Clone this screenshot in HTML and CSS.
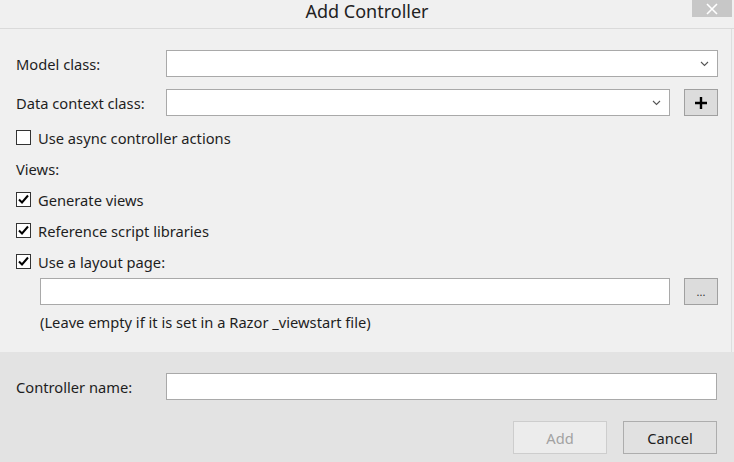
FILE: index.html
```html
<!DOCTYPE html>
<html lang="en">
<head>
<meta charset="UTF-8">
<meta name="viewport" content="width=device-width, initial-scale=1.0">
<title>Add Controller</title>
<link rel="stylesheet" href="styles.css">
</head>
<body>
<div class="dialog">
  <div class="titlebar">
    <span class="title">Add Controller</span>
    <div class="close">
      <svg width="14" height="14" viewBox="0 0 14 14"><path d="M2 2 L12 12 M12 2 L2 12" stroke="#fff" stroke-width="1.6"/></svg>
    </div>
  </div>

  <div class="main">
    <div class="field-row">
      <label class="label">Model class:</label>
      <div class="combo">
        <svg class="chevron" width="9" height="6" viewBox="0 0 9 6"><path d="M1 1 L4.5 4.5 L8 1" fill="none" stroke="#555" stroke-width="1.1"/></svg>
      </div>
    </div>
    <div class="field-row">
      <label class="label">Data context class:</label>
      <div class="combo">
        <svg class="chevron" width="9" height="6" viewBox="0 0 9 6"><path d="M1 1 L4.5 4.5 L8 1" fill="none" stroke="#555" stroke-width="1.1"/></svg>
      </div>
      <button class="side-btn">
        <svg width="14" height="14" viewBox="0 0 14 14"><path d="M7 1 V13 M1 7 H13" stroke="#000" stroke-width="2.4"/></svg>
      </button>
    </div>

    <div class="check-row first">
      <span class="box"></span>
      <span>Use async controller actions</span>
    </div>
    <div class="check-row">
      <span>Views:</span>
    </div>
    <div class="check-row">
      <span class="box checked"><svg width="13" height="13" viewBox="0 0 13 13"><path d="M2 6.5 L5 9.5 L11 2.5" fill="none" stroke="#000" stroke-width="2"/></svg></span>
      <span>Generate views</span>
    </div>
    <div class="check-row">
      <span class="box checked"><svg width="13" height="13" viewBox="0 0 13 13"><path d="M2 6.5 L5 9.5 L11 2.5" fill="none" stroke="#000" stroke-width="2"/></svg></span>
      <span>Reference script libraries</span>
    </div>
    <div class="check-row">
      <span class="box checked"><svg width="13" height="13" viewBox="0 0 13 13"><path d="M2 6.5 L5 9.5 L11 2.5" fill="none" stroke="#000" stroke-width="2"/></svg></span>
      <span>Use a layout page:</span>
    </div>

    <div class="layout-row">
      <div class="textbox"></div>
      <button class="side-btn dots">...</button>
    </div>
    <p class="hint">(Leave empty if it is set in a Razor _viewstart file)</p>
  </div>

  <div class="footer">
    <div class="field-row">
      <label class="label">Controller name:</label>
      <div class="textbox"></div>
    </div>
    <div class="buttons">
      <button class="btn" disabled>Add</button>
      <button class="btn cancel">Cancel</button>
    </div>
  </div>
</div>
</body>
</html>
```

FILE: styles.css
```css
body {
  margin: 0;
  background-color: #f0f0f0;
  font-family: "Noto Sans", "Open Sans", sans-serif;
  font-size: 14.7px;
  color: #1e1e1e;
}

.dialog {
  width: 734px;
  height: 462px;
  display: flex;
  flex-direction: column;
}

.titlebar {
  position: relative;
  height: 28px;
  border-bottom: 1px solid #dadada;
  display: flex;
  justify-content: center;
  align-items: center;
}

.title {
  font-size: 18px;
  color: #222;
  margin-top: -7px;
}

.close {
  position: absolute;
  top: 0;
  right: 2px;
  width: 40px;
  height: 17px;
  background-color: #c7c7c7;
  display: flex;
  justify-content: center;
  align-items: center;
}

.main {
  flex: 1;
  padding: 21px 13px 0 16px;
  margin-right: 2px;
  border-right: 1px solid #dedede;
}

.field-row {
  display: flex;
  align-items: center;
  height: 27px;
  margin-bottom: 12px;
}

.label {
  width: 150px;
}

.combo,
.textbox {
  flex: 1;
  height: 25px;
  background-color: #fff;
  border: 1px solid #a9a9a9;
  position: relative;
}

.chevron {
  position: absolute;
  right: 8px;
  top: 10px;
}

.side-btn {
  width: 34px;
  height: 27px;
  margin-left: 14px;
  background-color: #dcdcdc;
  border: 1px solid #a0a0a0;
  padding: 0;
  display: flex;
  justify-content: center;
  align-items: center;
  font-family: inherit;
}

.side-btn.dots {
  font-size: 11px;
  color: #333;
  align-items: flex-end;
  padding-bottom: 7px;
  line-height: 1;
}

.check-row {
  height: 31px;
  display: flex;
  align-items: center;
}

.check-row.first {
  margin-top: -6px;
}

.box {
  width: 13px;
  height: 13px;
  border: 1px solid #333;
  background-color: #fff;
  margin-right: 7px;
  display: flex;
  justify-content: center;
  align-items: center;
}

.layout-row {
  display: flex;
  height: 27px;
  margin-top: 1px;
  margin-left: 24px;
}

.layout-row .textbox {
  height: 25px;
}

.hint {
  margin: 6px 0 0 24px;
  line-height: 22px;
}

.footer {
  height: 110px;
  background-color: #e3e3e3;
  padding: 21px 17px 0 16px;
  box-sizing: border-box;
}

.footer .field-row {
  margin-bottom: 21px;
}

.buttons {
  display: flex;
  justify-content: flex-end;
  gap: 16px;
}

.btn {
  width: 94px;
  height: 33px;
  font-family: inherit;
  font-size: 14.7px;
  background-color: #e1e1e1;
  border: 1px solid #adadad;
  color: #1e1e1e;
}

.btn:disabled {
  background-color: #ececec;
  border-color: #cdcdcd;
  color: #a2a2a2;
}
```
